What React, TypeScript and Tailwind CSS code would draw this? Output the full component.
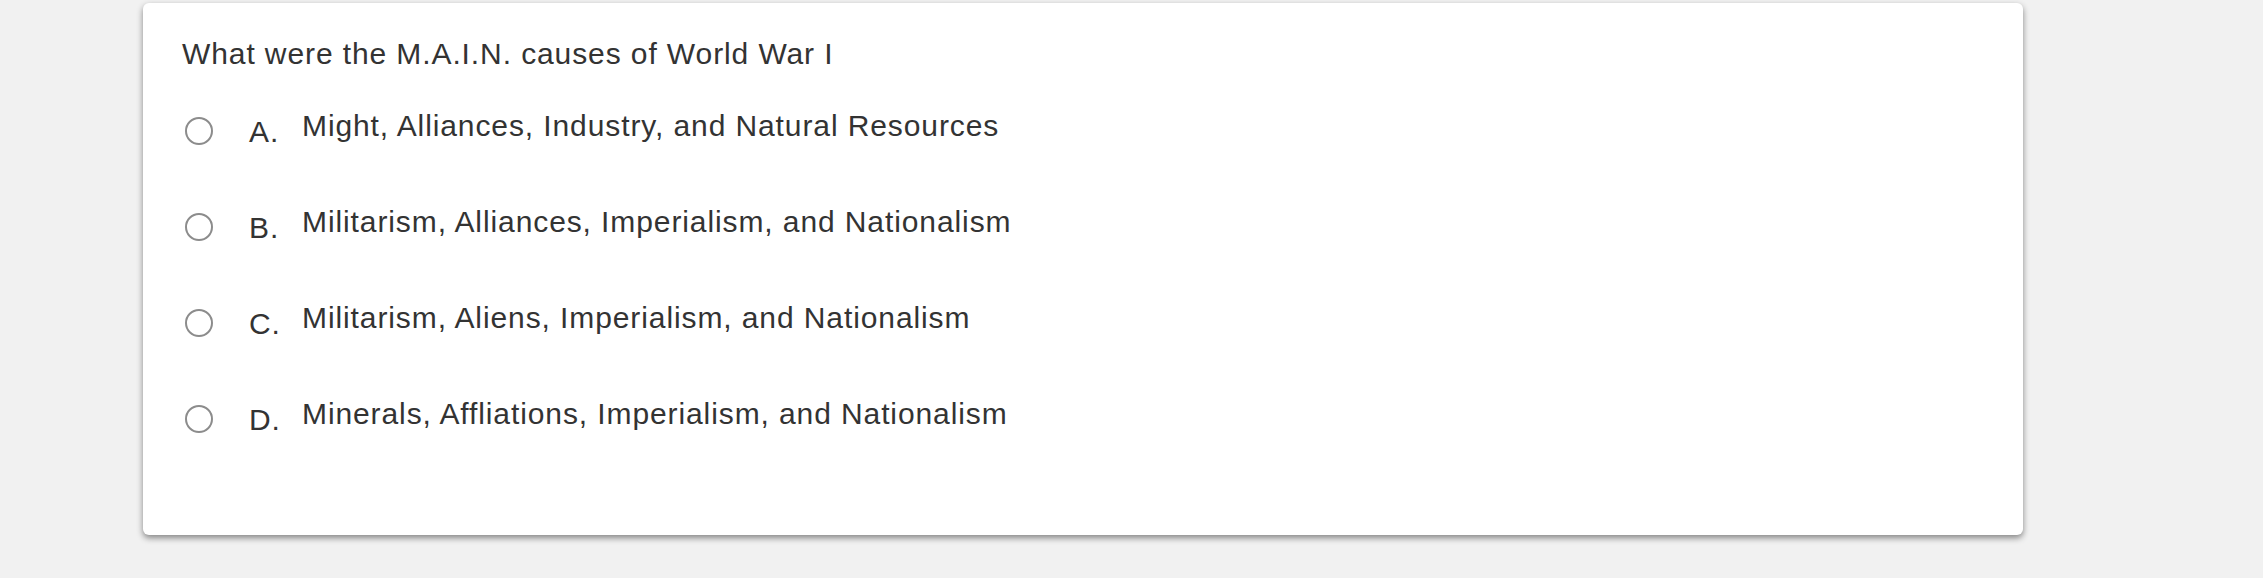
import React from "react";

const options = [
  { l: "A.", t: "Might, Alliances, Industry, and Natural Resources" },
  { l: "B.", t: "Militarism, Alliances, Imperialism, and Nationalism" },
  { l: "C.", t: "Militarism, Aliens, Imperialism, and Nationalism" },
  { l: "D.", t: "Minerals, Affliations, Imperialism, and Nationalism" },
];

export default function App() {
  return (
    <div
      className="w-[2263px] h-[578px] bg-[#f1f1f1] overflow-hidden pt-[3px] pl-[143px]"
      style={{ fontFamily: '"Liberation Sans", Arial, sans-serif' }}
    >
      <div className="w-[1880px] h-[532px] bg-white rounded-[6px] shadow-[0_3px_6px_rgba(0,0,0,0.45)] pt-[35px] pl-[39px] text-[#333333]">
        <div className="text-[30px] leading-[32px] tracking-[0.9px]">What were the M.A.I.N. causes of World War I</div>
        <div className="mt-[40px] flex flex-col">
          {options.map((o) => (
            <div key={o.l} className="flex items-start h-[96px]">
              <div className="ml-[3px] mt-[7px] w-[28px] h-[28px] rounded-full border-[2.5px] border-[#8c8c8c] shrink-0" />
              <div className="ml-[36px] mt-[6px] w-[53px] text-[30px] leading-[32px] tracking-[0.9px] shrink-0">{o.l}</div>
              <div className="text-[30px] leading-[32px] tracking-[0.9px]">{o.t}</div>
            </div>
          ))}
        </div>
      </div>
    </div>
  );
}
